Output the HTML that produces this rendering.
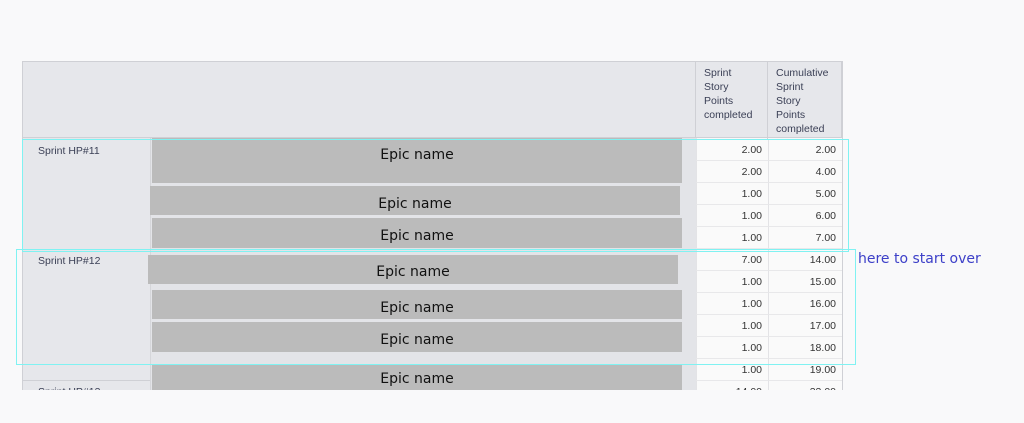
<!DOCTYPE html>
<html><head><style>
body{margin:0;width:1024px;height:423px;background:#f9f9fa;font-family:"Liberation Sans",sans-serif;position:relative;overflow:hidden}
.a{position:absolute}
.hdr{left:22px;top:61px;width:820px;height:77px;background:#e6e7eb;border:1px solid #cfd0d5;box-sizing:border-box}
.h{font-size:10.5px;color:#3a3f55;line-height:14px}
.sc{left:22px;top:138px;width:128px;height:252px;background:#e6e7eb;border-left:1px solid #cfd0d5}
.ec{left:150px;top:138px;width:546px;height:252px;background:#e3e4e8;border-left:1px solid #d5d6da}
.num{width:72px;height:22px;border-bottom:1px solid #e8e8ea;border-left:1px solid #e3e3e6;box-sizing:border-box;font-size:10.5px;color:#333;text-align:right;padding-right:6px;line-height:23px;background:#fafafa}
.box{background:#bbb;font-size:14px;color:#111;text-align:center;width:530px;font-family:"DejaVu Sans",sans-serif}
.cy{border:1.5px solid #80f2f2;box-sizing:border-box}
.sp{font-size:10.5px;color:#3a3f55}
</style></head><body>
<div class="a hdr"></div>
<div class="a" style="left:695px;top:61px;width:1px;height:330px;background:#cfd0d5"></div>
<div class="a" style="left:767px;top:61px;width:1px;height:330px;background:#cfd0d5"></div>
<div class="a" style="left:842px;top:61px;width:1px;height:330px;background:#cfd0d5"></div>
<div class="a h" style="left:704px;top:66px">Sprint<br>Story<br>Points<br>completed</div>
<div class="a h" style="left:776px;top:66px">Cumulative<br>Sprint<br>Story<br>Points<br>completed</div>
<div class="a sc"></div>
<div class="a ec"></div>
<div class="a" style="left:22px;top:380px;width:128px;height:1px;background:#cfd0d5"></div>
<div class="a sp" style="left:38px;top:145px">Sprint HP#11</div>
<div class="a sp" style="left:38px;top:255px">Sprint HP#12</div>
<div class="a sp" style="left:38px;top:386px">Sprint HP#13</div>
<div class="a" style="left:696px;top:139px">
<div class="num">2.00</div><div class="num">2.00</div><div class="num">1.00</div><div class="num">1.00</div><div class="num">1.00</div><div class="num">7.00</div><div class="num">1.00</div><div class="num">1.00</div><div class="num">1.00</div><div class="num">1.00</div><div class="num">1.00</div><div class="num">14.00</div></div>
<div class="a" style="left:768px;top:139px">
<div class="num" style="width:74px">2.00</div><div class="num" style="width:74px">4.00</div><div class="num" style="width:74px">5.00</div><div class="num" style="width:74px">6.00</div><div class="num" style="width:74px">7.00</div><div class="num" style="width:74px">14.00</div><div class="num" style="width:74px">15.00</div><div class="num" style="width:74px">16.00</div><div class="num" style="width:74px">17.00</div><div class="num" style="width:74px">18.00</div><div class="num" style="width:74px">19.00</div><div class="num" style="width:74px">33.00</div></div>
<div class="a box" style="left:152px;top:138px;height:45px;line-height:34px">Epic name</div>
<div class="a box" style="left:150px;top:186px;height:29px;line-height:36px">Epic name</div>
<div class="a box" style="left:152px;top:218px;height:30px;line-height:37px">Epic name</div>
<div class="a box" style="left:148px;top:255px;height:29px;line-height:34px">Epic name</div>
<div class="a box" style="left:152px;top:290px;height:29px;line-height:36px">Epic name</div>
<div class="a box" style="left:152px;top:322px;height:30px;line-height:37px">Epic name</div>
<div class="a box" style="left:152px;top:364px;height:30px;line-height:30px">Epic name</div>
<div class="a" style="left:0;top:390px;width:1024px;height:33px;background:#f9f9fa"></div>
<div class="a cy" style="left:22px;top:139px;width:827px;height:113px"></div>
<div class="a cy" style="left:16px;top:249px;width:840px;height:116px"></div>
<div class="a" style="left:858px;top:251px;font-size:14px;color:#3d40c8;font-family:'DejaVu Sans',sans-serif">here to start over</div>
</body></html>
